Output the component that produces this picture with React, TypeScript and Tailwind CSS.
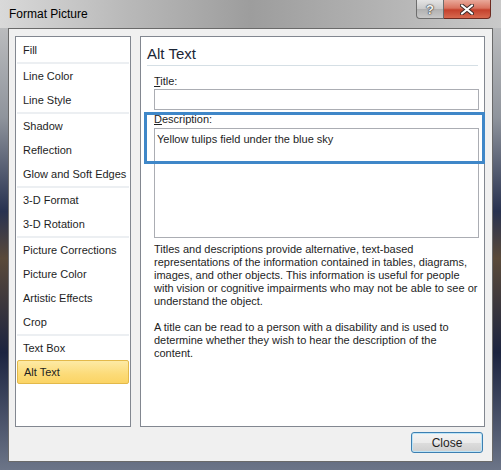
import React from "react";

const groups: string[][] = [
  ["Fill"],
  ["Line Color", "Line Style"],
  ["Shadow", "Reflection", "Glow and Soft Edges"],
  ["3-D Format", "3-D Rotation"],
  ["Picture Corrections", "Picture Color", "Artistic Effects", "Crop"],
  ["Text Box", "Alt Text"],
];

const selected = "Alt Text";

function TitleBar() {
  return (
    <div className="h-[28px] flex items-start justify-between bg-[linear-gradient(to_right,#d9d9d9,#b9b9b9_25%,#9d9d9d_50%,#b2b2b2_75%,#c9c9c9)]">
      <div className="pl-[9px] pt-[6px] text-[12px] leading-[16px] text-black">
        Format Picture
      </div>
      <div className="flex mr-[10px]">
        <div className="w-[28px] h-[19px] rounded-bl-[4px] border border-t-0 border-[#6d6d6d] bg-[linear-gradient(to_bottom,#e4e4e4,#c9c9c9_50%,#b1b1b1_52%,#c8c8c8)] flex items-center justify-center">
          <span className="text-[13px] font-bold leading-none text-[#f4f4f4] [text-shadow:0_0_1px_#333,0_0_1px_#333,0_0_2px_#555]">
            ?
          </span>
        </div>
        <div className="w-[47px] h-[19px] rounded-br-[4px] border border-l-0 border-t-0 border-[#6d2a20] bg-[linear-gradient(to_bottom,#e9a99a,#d9735f_45%,#c4412c_55%,#d7694f)] flex items-center justify-center">
          <svg width="14" height="11" viewBox="0 0 14 11">
            <path
              d="M2 1.5 L12 9.5 M12 1.5 L2 9.5"
              stroke="#3b2a28"
              strokeWidth="4"
              strokeLinecap="round"
            />
            <path
              d="M2 1.5 L12 9.5 M12 1.5 L2 9.5"
              stroke="#ffffff"
              strokeWidth="2.2"
              strokeLinecap="round"
            />
          </svg>
        </div>
      </div>
    </div>
  );
}

function CategoryList() {
  return (
    <div className="w-[116px] h-[391px] border border-[#828790] bg-white pt-[1px]">
      {groups.map((group, gi) => (
        <div key={gi}>
          {gi > 0 && <div className="mx-[1px] h-[2px] bg-[#eceff2]" />}
          {group.map((item) =>
            item === selected ? (
              <div
                key={item}
                className="mx-[1px] h-[24px] rounded-[2px] border border-[#e3b94a] bg-[linear-gradient(to_bottom,#fdeaa5,#fcdb78_60%,#fbd465)] pl-[6px] flex items-center text-[11px] text-[#1e1e1e]"
              >
                {item}
              </div>
            ) : (
              <div
                key={item}
                className="h-[24px] pl-[7px] flex items-center text-[11px] text-[#1e1e1e]"
              >
                {item}
              </div>
            )
          )}
        </div>
      ))}
    </div>
  );
}

function AltTextPanel() {
  return (
    <div className="w-[345px] h-[391px] border border-[#828790] bg-white">
      <div className="mx-[6px] h-[29px] border-b border-[#d5dfe5] flex items-end pb-[1px]">
        <span className="text-[15px] leading-[20px] text-[#1b2636]">
          Alt Text
        </span>
      </div>
      <div className="pl-[13px] pt-[8px] w-[338px] text-[11px] text-[#1e1e1e]">
        <div className="leading-[15px]">
          <span className="underline">T</span>itle:
        </div>
        <div className="h-[21px] w-[325px] border border-[#abadb3] bg-white" />
        <div className="leading-[16px] mt-[1px]">
          <span className="underline">D</span>escription:
        </div>
        <div className="mt-[1px] h-[110px] w-[325px] border border-[#abadb3] bg-white pl-[2px] pt-[2px] leading-[16px]">
          Yellow tulips field under the blue sky
        </div>
        <p className="mt-[5px] leading-[13px] whitespace-nowrap">
          Titles and descriptions provide alternative, text-based
          <br />
          representations of the information contained in tables, diagrams,
          <br />
          images, and other objects. This information is useful for people
          <br />
          with vision or cognitive impairments who may not be able to see or
          <br />
          understand the object.
        </p>
        <p className="mt-[13px] leading-[13px] whitespace-nowrap">
          A title can be read to a person with a disability and is used to
          <br />
          determine whether they wish to hear the description of the
          <br />
          content.
        </p>
      </div>
    </div>
  );
}

export default function App() {
  return (
    <div className="relative w-[501px] h-[470px] overflow-hidden font-['Liberation_Sans',Arial,sans-serif] bg-[linear-gradient(to_bottom,#c8c8c8,#8f949c_25%,#283250_45%,#5a4a3a_55%,#1c2440_75%,#6c7588)]">
      <TitleBar />
      <div className="px-[8px] pb-[8px]">
        <div className="h-[434px] border border-[#6a6a6a] bg-[#f0f0f0] flex flex-col">
          <div className="flex gap-[9px] pl-[6px] pt-[7px]">
            <CategoryList />
            <AltTextPanel />
          </div>
          <div className="flex justify-end pr-[9px] pt-[5px]">
            <button className="w-[72px] h-[21px] rounded-[3px] border border-[#3c7fb1] bg-[linear-gradient(to_bottom,#f4f4f4,#ebebeb_50%,#dddddd_50%,#cfcfcf)] shadow-[inset_0_0_0_1px_#bde4f7] text-[12px] leading-none text-[#1e1e1e]">
              Close
            </button>
          </div>
        </div>
      </div>
      <div className="absolute left-[144px] top-[112px] w-[341px] h-[52px] border-[3px] border-[#3f87c8] pointer-events-none" />
    </div>
  );
}
